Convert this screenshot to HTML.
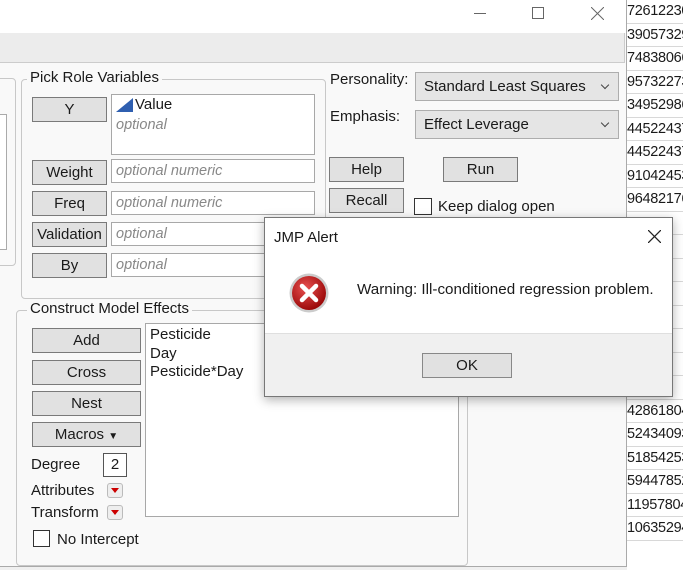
<!DOCTYPE html>
<html><head><style>
*{box-sizing:border-box;margin:0;padding:0}
body{width:683px;height:570px;overflow:hidden;background:#f0f0f0;font-family:"Liberation Sans",sans-serif;font-size:15px;color:#1a1a1a;position:relative}
.a{position:absolute}
.btn{position:absolute;background:#e1e1e1;border:1px solid #7a7a7a;text-align:center;line-height:24px;font-size:15px}
.fld{position:absolute;background:#fff;border:1px solid #a8a8a8;color:#888;font-style:italic;padding-left:4px;line-height:22px;font-size:14.5px}
.grp{position:absolute;border:1px solid #c8c8c8;border-radius:4px}
.lbl{position:absolute;background:#f9f9f9;padding:0 3px;font-size:15px}
.dd{position:absolute;background:#e5e5e5;border:1px solid #adadad;padding-left:8px;line-height:28px;font-size:15px}
.dd:after{content:"";position:absolute;right:10px;top:9px;width:5px;height:5px;border-right:1.3px solid #444;border-bottom:1.3px solid #444;transform:rotate(45deg)}
.num{position:absolute;left:627px;width:60px;height:23.5px;border-bottom:1px solid #d8d8d8;background:#fff;font-size:14.5px;line-height:22px;letter-spacing:-0.3px;white-space:nowrap;overflow:hidden}
.rd{position:absolute;width:16px;height:15px;border:1px solid #bbb;border-radius:3px;background:#eee}
.rd:after{content:"";position:absolute;left:3px;top:4px;border-left:4px solid transparent;border-right:4px solid transparent;border-top:5px solid #c00}
</style></head><body>
<div class="a" style="left:627px;top:0;width:56px;height:570px;background:#fff"></div>
<div class="num" style="top:0">72612230</div>
<div class="num" style="top:23.5px">39057329</div>
<div class="num" style="top:47px">74838066</div>
<div class="num" style="top:70.5px">95732273</div>
<div class="num" style="top:94px">34952986</div>
<div class="num" style="top:117.5px">44522437</div>
<div class="num" style="top:141px">44522437</div>
<div class="num" style="top:164.5px">91042453</div>
<div class="num" style="top:188px">96482176</div>
<div class="num" style="top:211.5px">77</div>
<div class="num" style="top:235px">24</div>
<div class="num" style="top:258.5px">24</div>
<div class="num" style="top:282px">24</div>
<div class="num" style="top:305.5px">91</div>
<div class="num" style="top:329px">04</div>
<div class="num" style="top:352.5px">13</div>
<div class="num" style="top:376px">10</div>
<div class="num" style="top:399.5px">42861804</div>
<div class="num" style="top:423px">52434093</div>
<div class="num" style="top:446.5px">51854253</div>
<div class="num" style="top:470px">59447852</div>
<div class="num" style="top:493.5px">11957804</div>
<div class="num" style="top:517px">10635294</div>

<div class="a" style="left:0;top:0;width:627px;height:567px;background:#f9f9f9;border-right:1px solid #aaa;border-bottom:1px solid #aaa"></div>
<div class="a" style="left:0;top:0;width:626px;height:33px;background:#fff"></div>
<div class="a" style="left:474px;top:13px;width:12px;height:1px;background:#666"></div>
<div class="a" style="left:532px;top:7px;width:12px;height:12px;border:1px solid #666"></div>
<svg class="a" style="left:591px;top:7px" width="13" height="13"><path d="M0 0L13 13M13 0L0 13" stroke="#666" stroke-width="1"/></svg>
<div class="a" style="left:0;top:33px;width:625px;height:30px;background:#ececec;border-bottom:1px solid #ccc;border-right:1px solid #ccc"></div>

<div class="grp" style="left:-5px;top:78px;width:21px;height:188px"></div>
<div class="a" style="left:-2px;top:114px;width:9px;height:136px;border:1px solid #aaa;background:#fff"></div>

<div class="grp" style="left:21px;top:79px;width:305px;height:220px"></div>
<div class="lbl" style="left:27px;top:69px">Pick Role Variables</div>
<div class="btn" style="left:32px;top:97px;width:75px;height:25px">Y</div>
<div class="a" style="left:111px;top:94px;width:204px;height:61px;background:#fff;border:1px solid #a8a8a8"></div>
<svg class="a" style="left:116px;top:98px" width="17" height="14"><polygon points="0,14 17,0 17,14" fill="#2f5fb0"/></svg>
<div class="a" style="left:135px;top:96px">Value</div>
<div class="a" style="left:116px;top:117px;color:#888;font-style:italic;font-size:14.5px">optional</div>
<div class="btn" style="left:32px;top:160px;width:75px;height:25px">Weight</div>
<div class="fld" style="left:111px;top:159px;width:204px;height:24px">optional numeric</div>
<div class="btn" style="left:32px;top:191px;width:75px;height:25px">Freq</div>
<div class="fld" style="left:111px;top:191px;width:204px;height:24px">optional numeric</div>
<div class="btn" style="left:32px;top:222px;width:75px;height:25px">Validation</div>
<div class="fld" style="left:111px;top:222px;width:204px;height:24px">optional</div>
<div class="btn" style="left:32px;top:253px;width:75px;height:25px">By</div>
<div class="fld" style="left:111px;top:253px;width:204px;height:24px">optional</div>

<div class="a" style="left:330px;top:71px">Personality:</div>
<div class="dd" style="left:415px;top:72px;width:204px;height:29px">Standard Least Squares</div>
<div class="a" style="left:330px;top:108px">Emphasis:</div>
<div class="dd" style="left:415px;top:110px;width:204px;height:29px">Effect Leverage</div>
<div class="btn" style="left:329px;top:157px;width:75px;height:25px">Help</div>
<div class="btn" style="left:443px;top:157px;width:75px;height:25px">Run</div>
<div class="btn" style="left:329px;top:188px;width:75px;height:25px">Recall</div>
<div class="a" style="left:414px;top:198px;width:18px;height:17px;background:#fff;border:1px solid #333"></div>
<div class="a" style="left:438px;top:198px">Keep dialog open</div>

<div class="grp" style="left:16px;top:310px;width:452px;height:256px"></div>
<div class="lbl" style="left:27px;top:300px">Construct Model Effects</div>
<div class="btn" style="left:32px;top:328px;width:109px;height:25px">Add</div>
<div class="btn" style="left:32px;top:360px;width:109px;height:25px">Cross</div>
<div class="btn" style="left:32px;top:391px;width:109px;height:25px">Nest</div>
<div class="btn" style="left:32px;top:422px;width:109px;height:25px">Macros <span style="font-size:10px">▼</span></div>
<div class="a" style="left:145px;top:323px;width:314px;height:194px;background:#fff;border:1px solid #a8a8a8;padding:2px 4px;line-height:18.5px">Pesticide<br>Day<br>Pesticide*Day</div>
<div class="a" style="left:31px;top:456px">Degree</div>
<div class="a" style="left:103px;top:453px;width:24px;height:24px;background:#fff;border:1px solid #555;text-align:center;line-height:22px">2</div>
<div class="a" style="left:31px;top:482px">Attributes</div>
<div class="rd" style="left:107px;top:483px"></div>
<div class="a" style="left:31px;top:504px">Transform</div>
<div class="rd" style="left:107px;top:505px"></div>
<div class="a" style="left:33px;top:530px;width:17px;height:17px;background:#fff;border:1px solid #333"></div>
<div class="a" style="left:57px;top:531px">No Intercept</div>

<div class="a" style="left:264px;top:217px;width:409px;height:180px;background:#fff;border:1px solid #777;box-shadow:0 3px 10px rgba(0,0,0,.3)"></div>
<div class="a" style="left:265px;top:333px;width:407px;height:63px;background:#f0f0f0;border-top:1px solid #dfdfdf"></div>
<div class="a" style="left:274px;top:229px">JMP Alert</div>
<svg class="a" style="left:648px;top:230px" width="13" height="13"><path d="M0 0L13 13M13 0L0 13" stroke="#222" stroke-width="1.3"/></svg>
<svg class="a" style="left:289px;top:273px" width="40" height="40"><defs><radialGradient id="g" cx="40%" cy="35%" r="65%"><stop offset="0" stop-color="#e85050"/><stop offset="1" stop-color="#9c0a0a"/></radialGradient></defs><circle cx="20" cy="20" r="19.5" fill="#ccc"/><circle cx="20" cy="20" r="17" fill="url(#g)"/><path d="M13 13L27 27M27 13L13 27" stroke="#fff" stroke-width="4.5" stroke-linecap="round"/></svg>
<div class="a" style="left:357px;top:281px;font-size:15.2px">Warning: Ill-conditioned regression problem.</div>
<div class="btn" style="left:422px;top:353px;width:90px;height:25px;border-color:#888">OK</div>
</body></html>
